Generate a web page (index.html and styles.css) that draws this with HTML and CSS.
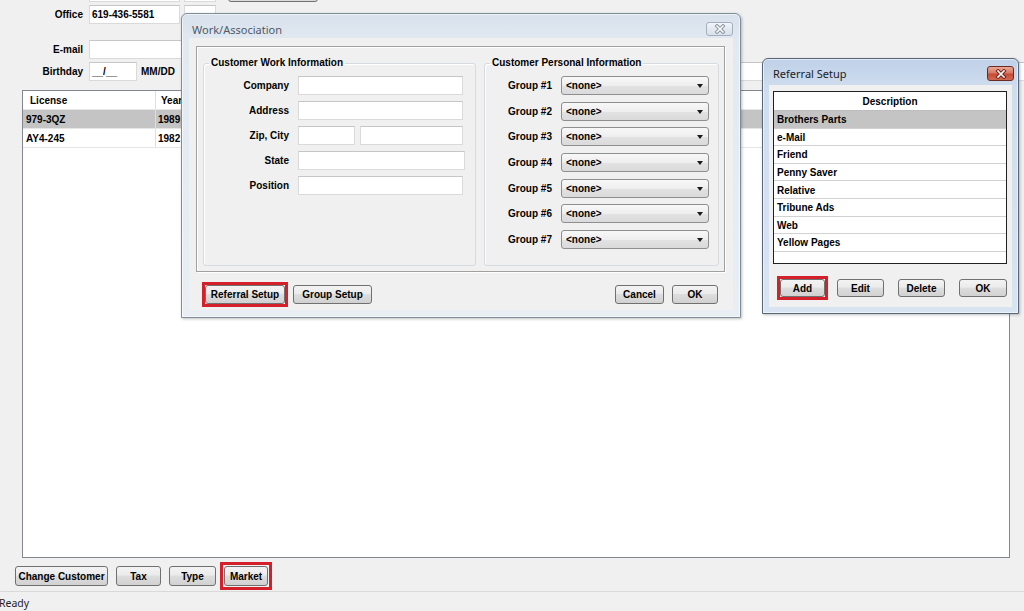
FILE: index.html
```html
<!DOCTYPE html>
<html lang="en">
<head>
  <meta charset="UTF-8" />
  <meta name="viewport" content="width=device-width, initial-scale=1.0" />
  <title>Customer - Work/Association</title>
  <link rel="stylesheet" href="styles.css">
</head>
<body>
  <div class="app">
    <div class="form">
      <div class="row stub">
        <span class="lbl"></span>
        <span class="field w91"></span>
        <span class="field w32"></span>
        <span class="stub-btn"></span>
      </div>
      <div class="row office">
        <label class="lbl">Office</label>
        <span class="field w91">619-436-5581</span>
        <span class="field w32"></span>
      </div>
      <div class="row email">
        <label class="lbl">E-mail</label>
        <span class="field w-email"></span>
      </div>
      <div class="row birth">
        <label class="lbl">Birthday</label>
        <span class="field w48">__/__</span>
        <span class="hint">MM/DD</span>
        <span class="field notes"></span>
      </div>
    </div>

    <div class="grid">
      <div class="grid-row head">
        <div class="c-lic">License</div>
        <div class="c-year">Year</div>
      </div>
      <div class="grid-row sel">
        <div class="c-lic">979-3QZ</div>
        <div class="c-year">1989</div>
      </div>
      <div class="grid-row">
        <div class="c-lic">AY4-245</div>
        <div class="c-year">1982</div>
      </div>
    </div>

    <div class="actions">
      <button class="btn b-change">Change Customer</button>
      <button class="btn b-tax">Tax</button>
      <button class="btn b-type">Type</button>
      <span class="mark m-market"><button class="btn b-market">Market</button></span>
    </div>

    <div class="status">Ready</div>

    <!-- Work/Association dialog -->
    <div class="window work">
      <div class="titlebar">
        <span class="title">Work/Association</span>
        <span class="close">
          <svg width="12" height="10" viewBox="0 0 12 10"><path d="M3 2L9 8M9 2L3 8" stroke="#8794a3" stroke-width="3.4" stroke-linecap="square"/><path d="M3 2L9 8M9 2L3 8" stroke="#fff" stroke-width="1.5" stroke-linecap="square"/></svg>
        </span>
      </div>
      <div class="client">
        <div class="panel">
          <fieldset class="group g-work">
            <legend>Customer Work Information</legend>
            <div class="g-row"><span class="g-lbl">Company</span><span class="field w165"></span></div>
            <div class="g-row"><span class="g-lbl">Address</span><span class="field w165"></span></div>
            <div class="g-row"><span class="g-lbl">Zip, City</span><span class="field w57"></span><span class="field w103"></span></div>
            <div class="g-row"><span class="g-lbl">State</span><span class="field w167"></span></div>
            <div class="g-row"><span class="g-lbl">Position</span><span class="field w165"></span></div>
          </fieldset>
          <fieldset class="group g-personal">
            <legend>Customer Personal Information</legend>
            <div class="g-row"><span class="g-lbl">Group #1</span><span class="select">&lt;none&gt;</span></div>
            <div class="g-row"><span class="g-lbl">Group #2</span><span class="select">&lt;none&gt;</span></div>
            <div class="g-row"><span class="g-lbl">Group #3</span><span class="select">&lt;none&gt;</span></div>
            <div class="g-row"><span class="g-lbl">Group #4</span><span class="select">&lt;none&gt;</span></div>
            <div class="g-row"><span class="g-lbl">Group #5</span><span class="select">&lt;none&gt;</span></div>
            <div class="g-row"><span class="g-lbl">Group #6</span><span class="select">&lt;none&gt;</span></div>
            <div class="g-row"><span class="g-lbl">Group #7</span><span class="select">&lt;none&gt;</span></div>
          </fieldset>
        </div>
        <div class="dlg-actions">
          <span class="mark m-referral"><button class="btn b-referral">Referral Setup</button></span>
          <button class="btn b-group">Group Setup</button>
          <button class="btn b-cancel">Cancel</button>
          <button class="btn b-ok">OK</button>
        </div>
      </div>
    </div>

    <!-- Referral Setup dialog -->
    <div class="window referral">
      <div class="titlebar">
        <span class="title">Referral Setup</span>
        <span class="close red">
          <svg width="12" height="10" viewBox="0 0 12 10"><path d="M3 2L9 8M9 2L3 8" stroke="#6b1d12" stroke-width="3.4" stroke-linecap="square"/><path d="M3 2L9 8M9 2L3 8" stroke="#fff" stroke-width="1.6" stroke-linecap="square"/></svg>
        </span>
      </div>
      <div class="client">
        <div class="listbox">
          <div class="lb-head">Description</div>
          <div class="lb-row sel">Brothers Parts</div>
          <div class="lb-row">e-Mail</div>
          <div class="lb-row">Friend</div>
          <div class="lb-row">Penny Saver</div>
          <div class="lb-row">Relative</div>
          <div class="lb-row">Tribune Ads</div>
          <div class="lb-row">Web</div>
          <div class="lb-row">Yellow Pages</div>
        </div>
        <div class="ref-actions">
          <span class="mark m-add"><button class="btn b-add">Add</button></span>
          <button class="btn b-edit">Edit</button>
          <button class="btn b-delete">Delete</button>
          <button class="btn b-refok">OK</button>
        </div>
      </div>
    </div>
  </div>
</body>
</html>
```

FILE: styles.css
```css
* {
  box-sizing: border-box;
}
body {
  margin: 0;
  font-family: 'Liberation Sans', Arial, sans-serif;
  font-size: 10px;
  font-weight: bold;
  color: #000;
  background: #f0f0f0;
}
.app {
  position: relative;
  width: 1024px;
  height: 611px;
  overflow: hidden;
  display: flex;
  flex-direction: column;
}

/* top form */
.form {
  display: flex;
  flex-direction: column;
}
.row {
  display: flex;
  align-items: center;
  height: 19px;
}
.row.stub {
  margin-top: -17px;
}
.row.office {
  margin-top: 3px;
}
.row.email {
  margin-top: 16px;
}
.row.birth {
  margin-top: 3px;
}
.lbl {
  width: 83px;
  margin-right: 6px;
  text-align: right;
}
.field {
  display: block;
  height: 19px;
  padding: 0 2px;
  line-height: 17px;
  background: #fff;
  border: 1px solid #dadada;
  border-top-color: #c6c6c6;
  white-space: nowrap;
}
.w91 { width: 91px; }
.w32 { width: 32px; margin-left: 4px; }
.w48 { width: 48px; }
.w-email { width: 320px; }
.stub-btn {
  width: 90px;
  height: 19px;
  margin-left: 12px;
  border: 1px solid #707070;
  border-radius: 3px;
  background: #dcdcdc;
}
.hint {
  margin-left: 4px;
}
.notes {
  flex: 1;
  margin-left: 6px;
  margin-right: -10px;
}

/* license grid */
.grid {
  margin: 9px 0 0 22px;
  width: 988px;
  height: 468px;
  background: #fff;
  border: 1px solid #828790;
}
.grid-row {
  display: flex;
  height: 19px;
  border-bottom: 1px solid #e6e6e6;
}
.grid-row.sel {
  background: #c4c4c4;
}
.c-lic {
  width: 133px;
  padding-left: 3px;
  display: flex;
  align-items: center;
  border-right: 1px solid #dedede;
}
.c-year {
  padding-left: 2px;
  display: flex;
  align-items: center;
}
.head .c-lic {
  padding-left: 7px;
  padding-top: 1px;
}
.head .c-year {
  padding-left: 5px;
  padding-top: 1px;
}

/* buttons */
.btn {
  display: flex;
  align-items: center;
  justify-content: center;
  height: 20px;
  padding: 0;
  font: inherit;
  color: #000;
  border: 1px solid #707070;
  border-radius: 3px;
  background: linear-gradient(#f3f3f3, #ebebeb 45%, #dddddd 50%, #d1d1d1);
  white-space: nowrap;
}
.mark {
  display: flex;
  border: 3px solid #d4202b;
}
.actions {
  display: flex;
  align-items: center;
  gap: 8px;
  margin: 8px 0 0 15px;
  height: 20px;
}
.b-change { width: 93px; }
.b-tax { width: 45px; }
.b-type { width: 47px; }
.m-market {
  margin-left: -4px;
  padding: 1px;
}
.b-market { width: 44px; }

.status {
  margin-top: auto;
  height: 20px;
  padding-left: 0;
  border-top: 1px solid #d9d9d9;
  font-family: 'Noto Sans', 'Open Sans', sans-serif;
  font-weight: normal;
  font-size: 10.5px;
  line-height: 23px;
  color: #1e1e1e;
  text-indent: -1px;
}

/* dialog windows */
.window {
  position: absolute;
  display: flex;
  flex-direction: column;
  border: 1px solid #7f8c9a;
  border-radius: 6px 6px 0 0;
  box-shadow: 1px 1px 3px rgba(0,0,0,0.25), inset 0 0 0 1px rgba(255,255,255,0.55);
}
.window.work {
  left: 181px;
  top: 13px;
  width: 560px;
  height: 305px;
  padding: 0 7px 7px 7px;
  background: linear-gradient(#d8e2ed, #e2e9f1 30px, #e8eef4);
}
.window.referral {
  left: 762px;
  top: 58px;
  width: 257px;
  height: 256px;
  padding: 0 6px 6px 6px;
  border-color: #56677b;
  background: linear-gradient(#bfd1e8, #d0ddee 30px, #d9e4f2);
}
.titlebar {
  display: flex;
  align-items: center;
  justify-content: space-between;
  padding-top: 6px;
}
.work .titlebar {
  height: 24px;
}
.referral .titlebar {
  height: 26px;
  padding-top: 3px;
}
.title {
  padding-left: 3px;
  font-family: 'Noto Sans', 'Open Sans', sans-serif;
  font-weight: normal;
  font-size: 11px;
  color: #4f5966;
}
.referral .title {
  padding-left: 4px;
  color: #1c1c1c;
}
.close {
  display: flex;
  align-items: center;
  justify-content: center;
  width: 27px;
  height: 14px;
  border: 1px solid #a3afbd;
  border-radius: 3px;
  background: linear-gradient(#f3f6fa, #e3e9f0 50%, #d9e1ea);
}
.close.red {
  height: 15px;
  margin-right: -2px;
  border-color: #6e2a22;
  background: linear-gradient(#e9a795, #d77a66 45%, #c54a33 55%, #d06a52);
}
.client {
  flex: 1;
  display: flex;
  flex-direction: column;
  background: #f0f0f0;
}

/* work dialog body */
.panel {
  display: flex;
  gap: 8px;
  height: 226px;
  margin: 8px 8px 0 7px;
  padding: 10px 5px 5px 6px;
  border: 1px solid #a0a0a0;
  box-shadow: 1px 1px 0 #fff, inset 1px 1px 0 #fff;
}
.group {
  margin: 0;
  min-width: 0;
  padding: 7px 0 0 0;
  border: 1px solid #d5dbe1;
  border-radius: 3px;
  box-shadow: inset 1px 1px 0 #fff;
  display: flex;
  flex-direction: column;
}
.group legend {
  margin-left: 5px;
  padding: 0 2px;
  line-height: 12px;
}
.g-work {
  width: 273px;
  gap: 6px;
}
.g-personal {
  width: 235px;
  gap: 6.67px;
}
.g-row {
  display: flex;
  align-items: center;
  height: 19px;
}
.g-lbl {
  margin-right: 9px;
  text-align: right;
}
.g-work .g-lbl { width: 85px; }
.g-personal .g-lbl { width: 67px; }
.w165 { width: 165px; }
.w167 { width: 167px; }
.w57 { width: 57px; }
.w103 { width: 103px; margin-left: 5px; }
.select {
  position: relative;
  display: flex;
  align-items: center;
  width: 148px;
  height: 19px;
  padding-left: 4px;
  border: 1px solid #8e8f8f;
  border-radius: 3px;
  background: linear-gradient(#f8f8f8, #eeeeee 50%, #e2e2e2 51%, #dadada);
}
.select::after {
  content: "";
  position: absolute;
  right: 5px;
  top: 7px;
  border-left: 3.5px solid transparent;
  border-right: 3.5px solid transparent;
  border-top: 4px solid #1a1a1a;
}
.dlg-actions {
  display: flex;
  align-items: center;
  height: 25px;
  margin-top: 10px;
  padding: 0 15px 0 13px;
}
.dlg-actions .btn {
  height: 19px;
}
.b-referral { width: 80px; }
.b-group { width: 79px; margin-left: 5px; }
.b-cancel { width: 49px; margin-left: auto; }
.b-ok { width: 46px; margin-left: 8px; }

/* referral dialog body */
.listbox {
  height: 173px;
  margin: 6px 5px 0 4px;
  background: #fff;
  border: 1px solid #202020;
}
.lb-head {
  height: 19px;
  display: flex;
  align-items: center;
  justify-content: center;
  border-bottom: 1px solid #bdbdbd;
}
.lb-row {
  height: 17.6px;
  display: flex;
  align-items: center;
  padding-left: 3px;
  padding-top: 1px;
  border-bottom: 1px solid #d2d2d2;
}
.lb-row.sel {
  background: #c4c4c4;
}
.ref-actions {
  display: flex;
  align-items: center;
  margin-top: 12px;
  padding-left: 8px;
}
.ref-actions .btn {
  height: 18px;
}
.b-add { width: 45px; }
.b-edit { width: 47px; margin-left: 9px; }
.b-delete { width: 47px; margin-left: 14px; }
.b-refok { width: 48px; margin-left: 14px; }
```
